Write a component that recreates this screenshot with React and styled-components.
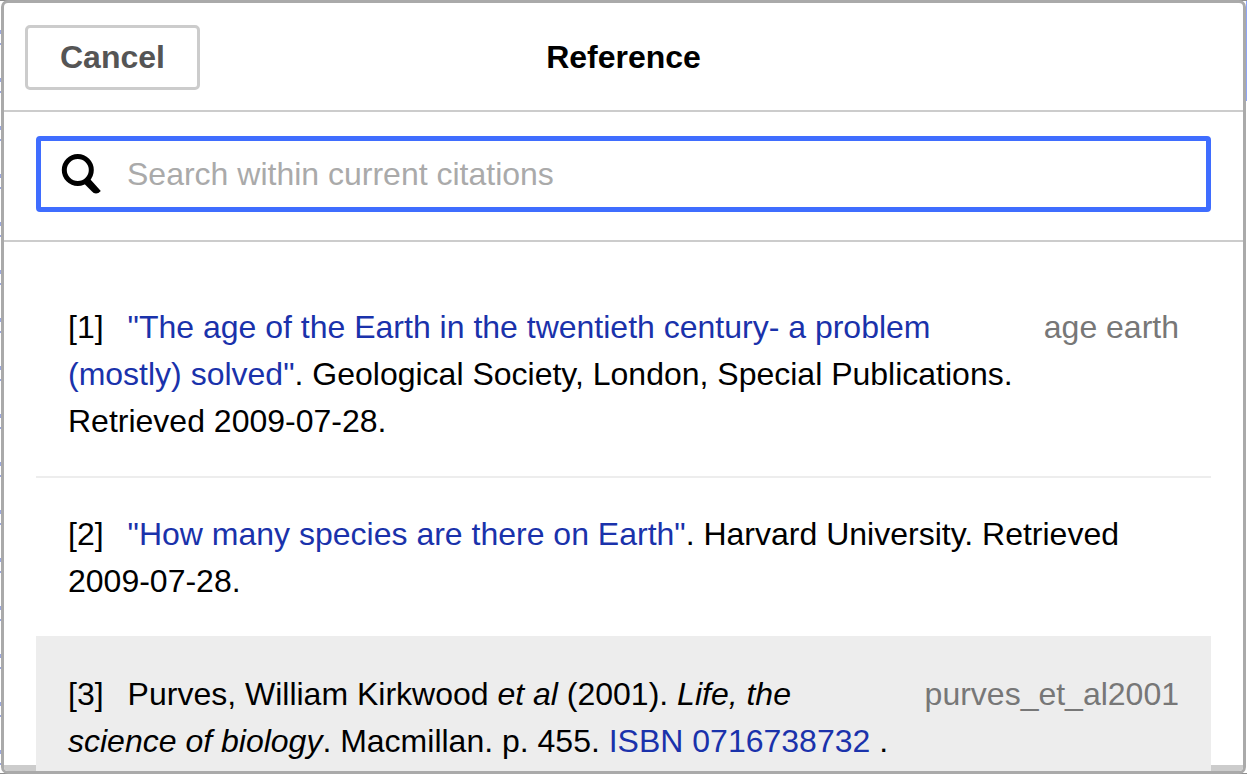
import React, { useState, useCallback } from "react";
import styled, { createGlobalStyle } from "styled-components";

const GlobalStyle = createGlobalStyle`
  * {
    box-sizing: border-box;
  }

  body {
    margin: 0;
    background: #ffffff;
    font-family: "Liberation Sans", Helvetica, Arial, sans-serif;
    font-size: 32px;
    line-height: 47px;
    color: #000000;
  }
`;

const PageStyle = styled.div`
  height: 100vh;
  padding: 0 1px 1px;
  background:
    linear-gradient(#8f8f8f, #8f8f8f) 0 0 / 100% 1px no-repeat,
    linear-gradient(#8f8f8f, #8f8f8f) 0 calc(100% - 1px) / 100% 1px no-repeat,
    linear-gradient(#8fa5f5, #8fa5f5) 100% 0 / 1px 101px no-repeat,
    repeating-linear-gradient(#ffffff 0 30px, #9ba7dd 30px 34px, #ffffff 34px 43px, #9ba7dd 43px 45px, #ffffff 45px 48px)
      0 0 / 1px 100% no-repeat,
    #ffffff;
`;

const DialogStyle = styled.section`
  display: flex;
  flex-direction: column;
  height: 100%;
  border: 3px solid #aaaaaa;
  border-radius: 7px;
  background: #ffffff;
  overflow: hidden;
`;

const HeaderStyle = styled.header`
  display: grid;
  grid-template-columns: 1fr auto 1fr;
  align-items: center;
  flex-shrink: 0;
  height: 109px;
  padding: 2px 21px 0;
  border-bottom: 2px solid #cccccc;
`;

const TitleStyle = styled.h1`
  margin: 0;
  font-size: 32px;
  font-weight: bold;
`;

const ButtonStyle = styled.button`
  justify-self: start;
  height: 65px;
  padding: 0 32px;
  border: 3px solid #cccccc;
  border-radius: 5px;
  background: #ffffff;
  font-family: inherit;
  font-size: 32px;
  font-weight: bold;
  color: #555555;
`;

const SearchBarStyle = styled.div`
  flex-shrink: 0;
  padding: 24px 32px 28px;
  border-bottom: 2px solid #cccccc;
`;

const SearchLabelStyle = styled.label`
  display: flex;
  align-items: center;
  gap: 24px;
  height: 76px;
  padding: 0 20px;
  border: 5px solid #3f6dff;
  border-radius: 4px;
`;

const SearchInputStyle = styled.input`
  flex: 1;
  min-width: 0;
  padding: 0;
  border: 0;
  outline: 0;
  background: transparent;
  font-family: inherit;
  font-size: 32px;
  color: #000000;

  &::placeholder {
    color: #aaaaaa;
    opacity: 1;
  }
`;

const ContentStyle = styled.div`
  flex: 1;
  min-height: 0;
  overflow: hidden;
  padding: 29px 32px 0;
  background: linear-gradient(#cccccc, #cccccc) 0 100% / 100% 6px no-repeat;
`;

const ListStyle = styled.ol`
  margin: 0;
  padding: 0;
  list-style: none;
`;

const ItemStyle = styled.li`
  padding: 33px 32px 31px;
  border-bottom: 2px solid #ededed;
  background: ${({ $selected }) => ($selected ? "#ededed" : "#ffffff")};
`;

const NameStyle = styled.span`
  float: right;
  margin: 0 0 24px 24px;
  color: #777777;
`;

const NumberStyle = styled.span`
  margin-right: 24px;
`;

const LinkStyle = styled.a`
  color: #1a32ab;
  text-decoration: none;
`;

function SearchIcon() {
  return (
    <svg width="42" height="42" viewBox="0 0 42 42" aria-hidden="true">
      <circle cx="16.8" cy="17" r="13.5" fill="none" stroke="#000000" strokeWidth="5" />
      <path d="M23 30.5L31 38.5Q32.5 40.6 35 40.6Q37.5 40.6 39.8 38L29.5 26.5L28 24Z" />
    </svg>
  );
}

function Citation({ number, name, selected, children }) {
  return (
    <ItemStyle $selected={selected}>
      {name && <NameStyle>{name}</NameStyle>}
      <NumberStyle>{`[${number}]`}</NumberStyle>
      {children}
    </ItemStyle>
  );
}

function App() {
  const [query, setQuery] = useState("");

  const handleChangeQuery = useCallback(({ target: { value } }) => {
    setQuery(value);
  }, []);

  return (
    <PageStyle>
      <GlobalStyle />
      <DialogStyle role="dialog" aria-labelledby="dialog-title">
        <HeaderStyle>
          <ButtonStyle type="button">Cancel</ButtonStyle>
          <TitleStyle id="dialog-title">Reference</TitleStyle>
        </HeaderStyle>
        <SearchBarStyle>
          <SearchLabelStyle htmlFor="citation-search">
            <SearchIcon />
            <SearchInputStyle
              id="citation-search"
              type="text"
              placeholder="Search within current citations"
              value={query}
              onChange={handleChangeQuery}
            />
          </SearchLabelStyle>
        </SearchBarStyle>
        <ContentStyle>
          <ListStyle>
            <Citation number={1} name="age earth">
              <LinkStyle href="#age">
                "The age of the Earth in the twentieth century- a problem (mostly) solved"
              </LinkStyle>
              . Geological Society, London, Special Publications. Retrieved 2009-07-28.
            </Citation>
            <Citation number={2}>
              <LinkStyle href="#species">"How many species are there on Earth"</LinkStyle>
              . Harvard University. Retrieved 2009-07-28.
            </Citation>
            <Citation number={3} name="purves_et_al2001" selected>
              Purves, William Kirkwood <em>et al</em> (2001). <em>Life, the science of biology</em>.
              Macmillan. p. 455. <LinkStyle href="#isbn">ISBN 0716738732</LinkStyle> .
            </Citation>
          </ListStyle>
        </ContentStyle>
      </DialogStyle>
    </PageStyle>
  );
}

export default App;
